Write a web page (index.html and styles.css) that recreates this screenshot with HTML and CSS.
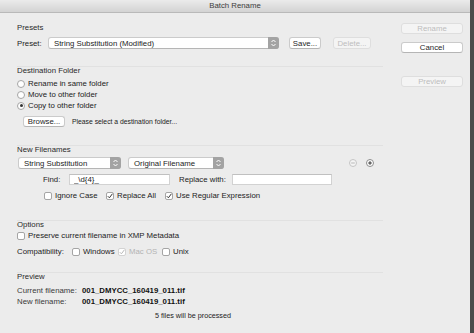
FILE: index.html
```html
<!DOCTYPE html>
<html lang="en">
<head>
    <meta charset="UTF-8">
    <title>Batch Rename</title>
    <link rel="stylesheet" href="styles.css">
</head>
<body>

<div class="window">
    <div class="titlebar">Batch Rename</div>
    <div class="content">
        <div class="main">

            <section class="group presets">
                <h2>Presets</h2>
                <div class="row preset-row">
                    <span class="label">Preset:</span>
                    <div class="select preset-select">
                        <span>String Substitution (Modified)</span>
                        <i class="arrows"><svg width="11" height="12" viewBox="0 0 11 12"><path d="M3.5 5 L5.5 3 L7.5 5 M3.5 7 L5.5 9 L7.5 7" fill="none" stroke="#fff" stroke-width="1"/></svg></i>
                    </div>
                    <button class="btn save">Save...</button>
                    <button class="btn delete" disabled>Delete...</button>
                </div>
            </section>

            <section class="group dest">
                <h2>Destination Folder</h2>
                <div class="row radio-row first"><span class="radio"></span>Rename in same folder</div>
                <div class="row radio-row"><span class="radio"></span>Move to other folder</div>
                <div class="row radio-row"><span class="radio on"></span>Copy to other folder</div>
                <div class="row browse-row">
                    <button class="btn browse">Browse...</button>
                    <span class="hint">Please select a destination folder...</span>
                </div>
            </section>

            <section class="group names">
                <h2>New Filenames</h2>
                <div class="row select-row">
                    <div class="select type-select">
                        <span>String Substitution</span>
                        <i class="arrows"><svg width="11" height="12" viewBox="0 0 11 12"><path d="M3.5 5 L5.5 3 L7.5 5 M3.5 7 L5.5 9 L7.5 7" fill="none" stroke="#fff" stroke-width="1"/></svg></i>
                    </div>
                    <div class="select source-select">
                        <span>Original Filename</span>
                        <i class="arrows"><svg width="11" height="12" viewBox="0 0 11 12"><path d="M3.5 5 L5.5 3 L7.5 5 M3.5 7 L5.5 9 L7.5 7" fill="none" stroke="#fff" stroke-width="1"/></svg></i>
                    </div>
                    <span class="round minus"><svg width="8" height="8" viewBox="0 0 8 8"><circle cx="4" cy="4" r="3.5" fill="#f4f4f4" stroke="#c4c4c4"/><path d="M2.2 4 H5.8" stroke="#b8b8b8"/></svg></span>
                    <span class="round plus"><svg width="8" height="8" viewBox="0 0 8 8"><circle cx="4" cy="4" r="3.5" fill="#fff" stroke="#8c8c8c"/><path d="M2.2 4 H5.8 M4 2.2 V5.8" stroke="#333"/></svg></span>
                </div>
                <div class="row find-row">
                    <span class="find-label">Find:</span>
                    <input class="field find" type="text" value="_\d{4}_">
                    <span class="replace-label">Replace with:</span>
                    <input class="field replace" type="text" value="">
                </div>
                <div class="row check-row">
                    <span class="check ignore"><span class="box"></span>Ignore Case</span>
                    <span class="check all"><span class="box"><svg width="6" height="6" viewBox="0 0 6 6"><path d="M0.8 3.2 L2.4 4.8 L5.4 0.8" fill="none" stroke="#333" stroke-width="1"/></svg></span>Replace All</span>
                    <span class="check"><span class="box"><svg width="6" height="6" viewBox="0 0 6 6"><path d="M0.8 3.2 L2.4 4.8 L5.4 0.8" fill="none" stroke="#333" stroke-width="1"/></svg></span>Use Regular Expression</span>
                </div>
            </section>

            <section class="group options">
                <h2>Options</h2>
                <div class="row preserve-row">
                    <span class="check"><span class="box"></span>Preserve current filename in XMP Metadata</span>
                </div>
                <div class="row compat-row">
                    <span class="compat-label">Compatibility:</span>
                    <span class="check windows"><span class="box"></span>Windows</span>
                    <span class="check mac off"><span class="box"><svg width="6" height="6" viewBox="0 0 6 6"><path d="M0.8 3.2 L2.4 4.8 L5.4 0.8" fill="none" stroke="#b8b8b8" stroke-width="1"/></svg></span>Mac OS</span>
                    <span class="check"><span class="box"></span>Unix</span>
                </div>
            </section>

            <section class="group preview">
                <h2>Preview</h2>
                <div class="row name-row first">
                    <span class="name-label">Current filename:</span>
                    <b>001_DMYCC_160419_011.tif</b>
                </div>
                <div class="row name-row">
                    <span class="name-label">New filename:</span>
                    <b>001_DMYCC_160419_011.tif</b>
                </div>
                <div class="row files-row">5 files will be processed</div>
            </section>

        </div>

        <div class="side">
            <button class="btn" disabled>Rename</button>
            <button class="btn cancel">Cancel</button>
            <button class="btn preview-btn" disabled>Preview</button>
        </div>
    </div>
</div>

</body>
</html>
```

FILE: styles.css
```css
*, *::before, *::after {
  padding: 0;
  margin: 0;
  box-sizing: border-box;
}

body {
  width: 474px;
  height: 333px;
  overflow: hidden;
  background-color: #4b4b4b;
  font-family: "Liberation Sans", Arial, sans-serif;
  font-size: 7.8px;
  color: #222;
}

.window {
  width: 470px;
  height: 333px;
  background-color: #ececec;
  display: flex;
  flex-direction: column;
}

.titlebar {
  height: 13px;
  line-height: 12px;
  text-align: center;
  color: #3c3c3c;
  background-image: linear-gradient(#ebebeb, #d3d3d3);
  border-bottom: 1px solid #b9b9b9;
}

.content {
  display: flex;
  flex: 1;
}

.main {
  width: 383px;
  padding: 11px 0 0 17px;
}

.side {
  width: 62px;
  margin-left: 18px;
  padding-top: 10px;
  display: flex;
  flex-direction: column;

  .btn { height: 11px; }
  .cancel { margin-top: 8px; }
  .preview-btn { margin-top: 23px; }
}

/* sections */
.group {
  border-top: 1px solid #e1e1e1;

  h2 {
    font-size: inherit;
    font-weight: normal;
    line-height: 8px;
    color: #2a2a2a;
  }
}

.presets { border-top: 0; }
.dest { margin-top: 17px; }
.names { margin-top: 18px; }
.options { margin-top: 19px; }
.preview { margin-top: 15px; }

.row {
  display: flex;
  align-items: center;
  height: 11px;
  white-space: nowrap;
}

/* controls */
.btn {
  font: inherit;
  color: #1e1e1e;
  background-color: #fff;
  border: 1px solid #cbcbcb;
  border-bottom-color: #b5b5b5;
  border-radius: 3px;
  line-height: 9px;

  &:disabled {
    color: #bdbdbd;
    background-color: #f4f4f4;
    border-color: #dedede;
  }
}

.select {
  display: flex;
  align-items: center;
  height: 12px;
  padding-left: 5px;
  background-color: #fff;
  border: 1px solid #cbcbcb;
  border-bottom-color: #b5b5b5;
  border-radius: 3px;

  .arrows {
    display: flex;
    margin-left: auto;
    width: 11px;
    height: 12px;
    margin-top: -1px;
    margin-bottom: -1px;
    margin-right: -1px;
    background-color: #a3a3a3;
    border-radius: 0 3px 3px 0;
  }
}

.field {
  font: inherit;
  color: #222;
  height: 11px;
  padding: 0 4px;
  background-color: #fff;
  border: 1px solid #d2d2d2;
  border-top-color: #c0c0c0;
  outline: none;
}

.radio {
  position: relative;
  width: 8px;
  height: 8px;
  margin-right: 3px;
  background-color: #fff;
  border: 1px solid #a5a5a5;
  border-radius: 50%;

  &.on::after {
    content: '';
    position: absolute;
    left: 1.5px; top: 1.5px;
    width: 3px; height: 3px;
    border-radius: 50%;
    background-color: #333;
  }
}

.check {
  display: flex;
  align-items: center;

  .box {
    display: flex;
    align-items: center;
    justify-content: center;
    width: 8px;
    height: 8px;
    margin-right: 3px;
    background-color: #fff;
    border: 1px solid #a5a5a5;
    border-radius: 2px;
  }

  &.off {
    color: #b3b3b3;
    .box { border-color: #d3d3d3; }
  }
}

/* presets */
.preset-row {
  height: 12px;
  margin-top: 5px;

  .label { width: 31px; }
  .preset-select { width: 231px; }
  .btn { height: 12px; }
  .save { width: 32px; margin-left: 10px; }
  .delete { width: 38px; margin-left: 12px; }
}

/* destination */
.radio-row.first { margin-top: 3px; }

.browse-row {
  margin-top: 5px;
  padding-left: 6px;

  .browse { width: 42px; height: 11px; }
  .hint { margin-left: 7px; font-size: 6.8px; }
}

/* new filenames */
.select-row {
  height: 12px;
  margin-top: 3px;
  padding-left: 1px;

  .type-select { width: 103px; }
  .source-select { width: 96px; margin-left: 7px; }
  .round { display: flex; }
  .minus { margin-left: 125px; }
  .plus { margin-left: 9px; }
}

.find-row {
  margin-top: 5px;
  padding-left: 26px;

  .find-label { width: 26px; }
  .find { width: 101px; }
  .replace-label { width: 53px; margin-left: 9px; }
  .replace { width: 100px; }
}

.check-row {
  margin-top: 5px;
  padding-left: 27px;

  .ignore { width: 62px; }
  .all { width: 59px; }
}

/* options */
.preserve-row { margin-top: 1px; }

.compat-row {
  margin-top: 5px;

  .compat-label { width: 55px; }
  .windows { width: 46px; }
  .mac { width: 44px; }
}

/* preview */
.name-row {
  b { color: #111; }
  &.first { margin-top: 4px; }
}

.name-label {
  width: 65px;
  color: #3a3a3a;
}

.files-row {
  height: 10px;
  margin-top: 3px;
  padding-left: 138px;
  font-size: 7.2px;
}
```
